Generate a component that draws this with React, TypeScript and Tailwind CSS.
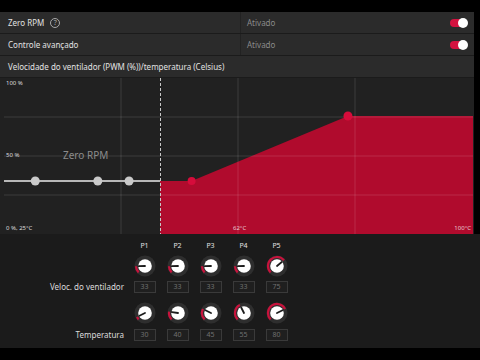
import React from "react";

const FONT = { fontFamily: '"Noto Sans", "Open Sans", sans-serif' };

const RED = "#b00b2d";
const DOT = "#d60c3b";

// chart geometry (local svg coords)
const CW = 474;
const CH = 156;
const X0 = 4;
const X1 = 473;
const tx = (t: number) => X0 + ((t - 25) / 75) * (X1 - X0);
const vy = (v: number) => CH * (1 - v / 100);

function Toggle() {
  return (
    <div className="relative mr-[4px] h-[8px] w-[18px]">
      <div className="absolute left-0 top-0 h-[8px] w-[15px] rounded-full bg-[#d3123f]" />
      <div className="absolute right-0 top-[-1px] h-[10px] w-[10px] rounded-full bg-white" />
    </div>
  );
}

function SettingRow({ label, value, help }: { label: string; value?: string; help?: boolean }) {
  return (
    <div className="flex h-[22px] border-b border-[#1b1b1b] bg-[#2b2b2b]">
      <div className="flex w-[240px] items-center gap-[6px] pl-[8px] text-[8px] text-[#e2e2e2]">
        <span>{label}</span>
        {help && (
          <span className="flex h-[10px] w-[10px] items-center justify-center rounded-full border border-[#a8a8a8] text-[7px] leading-none text-[#a8a8a8]">
            ?
          </span>
        )}
      </div>
      {value !== undefined && (
        <div className="flex flex-1 items-center justify-between border-l border-[#222] pl-[6px] pr-[2px] text-[8px] text-[#8a8a8a]">
          <span>{value}</span>
          <Toggle />
        </div>
      )}
    </div>
  );
}

function Chart() {
  const grid = [CH / 4, CH / 2, (CH * 3) / 4];
  const vgrid = [121, 238, 355];
  const zeroY = 103;
  const redPts = [
    [160, zeroY],
    [tx(55), zeroY],
    [tx(80), vy(75) - 1],
    [X1, vy(75) - 1],
    [X1, CH],
    [160, CH],
  ]
    .map((p) => p.join(","))
    .join(" ");
  return (
    <div className="relative h-[156px] w-[474px] bg-[#212121]">
      <svg width={CW} height={CH} className="block">
        <polygon points={redPts} fill={RED} />
        {grid.map((y) => (
          <line key={y} x1={X0} x2={X1} y1={y} y2={y} stroke="#ffffff" strokeOpacity={0.13} strokeWidth={1} />
        ))}
        {vgrid.map((x) => (
          <line key={x} x1={x} x2={x} y1={0} y2={CH} stroke="#ffffff" strokeOpacity={0.13} strokeWidth={1} />
        ))}
        <line x1={160.5} x2={160.5} y1={0} y2={CH} stroke="#c8c8c8" strokeWidth={1} strokeDasharray="3 2" />
        <line x1={X0} x2={160} y1={zeroY} y2={zeroY} stroke="#b8b8b8" strokeWidth={2} />
        {[30, 40, 45].map((t) => (
          <circle key={t} cx={tx(t)} cy={zeroY} r={4.5} fill="#cacaca" />
        ))}
        <circle cx={tx(55)} cy={zeroY} r={4} fill={DOT} />
        <circle cx={tx(80)} cy={vy(75) - 1} r={4.5} fill={DOT} />
      </svg>
      <span className="absolute left-[6px] top-[1px] text-[6px] text-[#dcdcdc]">100 %</span>
      <span className="absolute left-[6px] top-[73px] text-[6px] text-[#dcdcdc]">50 %</span>
      <span className="absolute left-[6px] top-[146px] text-[6px] text-[#dcdcdc]">0 %, 25°C</span>
      <span className="absolute left-[233px] top-[146px] text-[6px] text-[#e8c8d0]">62°C</span>
      <span className="absolute right-[3px] top-[146px] text-[6px] text-[#e8c8d0]">100°C</span>
      <span className="absolute left-[63px] top-[70px] text-[10px] text-[#8c8c8c]">Zero RPM</span>
    </div>
  );
}

function Knob({ frac }: { frac: number }) {
  const start = 225;
  const end = start + frac * 270;
  const r = 9;
  const pt = (deg: number, rad: number) => {
    const a = ((deg - 90) * Math.PI) / 180;
    return [11 + rad * Math.cos(a), 11 + rad * Math.sin(a)];
  };
  const [sx, sy] = pt(start, r);
  const [ex, ey] = pt(end, r);
  const large = frac * 270 > 180 ? 1 : 0;
  const [ix, iy] = pt(end, 6.2);
  return (
    <svg width={22} height={22} className="block">
      <circle cx={11} cy={11} r={10.5} fill="#2e2e2e" />
      <path d={`M ${sx} ${sy} A ${r} ${r} 0 ${large} 1 ${ex} ${ey}`} fill="none" stroke="#c8123c" strokeWidth={2.2} />
      <circle cx={11} cy={11} r={6.8} fill="#ffffff" />
      <line x1={11} y1={11} x2={ix} y2={iy} stroke="#1c1c1c" strokeWidth={1.8} strokeLinecap="round" />
    </svg>
  );
}

function ValueBox({ v }: { v: number }) {
  return (
    <div className="flex h-[12px] w-[22px] items-center justify-center border border-[#3a3a3a] bg-[#1f1f1f] text-[7px] text-[#707070]">
      {v}
    </div>
  );
}

const fan = [33, 33, 33, 33, 75];
const temp = [30, 40, 45, 55, 80];

function Points() {
  return (
    <div className="h-[114px] w-[480px] bg-[#1b1b1b] pt-[7px]">
      <div className="flex">
        <div className="w-[128px]" />
        {["P1", "P2", "P3", "P4", "P5"].map((p) => (
          <div key={p} className="flex w-[33px] justify-center text-[7px] leading-[10px] text-[#e0e0e0]">
            {p}
          </div>
        ))}
      </div>
      <div className="mt-[4px] flex">
        <div className="w-[128px]" />
        {fan.map((v, i) => (
          <div key={i} className="flex w-[33px] justify-center">
            <Knob frac={(v - 20) / 80} />
          </div>
        ))}
      </div>
      <div className="mt-[4px] flex h-[12px] items-center">
        <div className="w-[128px] pr-[4px] text-right text-[8px] text-[#dcdcdc]">Veloc. do ventilador</div>
        {fan.map((v, i) => (
          <div key={i} className="flex w-[33px] justify-center">
            <ValueBox v={v} />
          </div>
        ))}
      </div>
      <div className="mt-[9px] flex">
        <div className="w-[128px]" />
        {temp.map((v, i) => (
          <div key={i} className="flex w-[33px] justify-center">
            <Knob frac={(v - 25) / 75} />
          </div>
        ))}
      </div>
      <div className="mt-[5px] flex h-[12px] items-center">
        <div className="w-[128px] pr-[4px] text-right text-[8px] text-[#dcdcdc]">Temperatura</div>
        {temp.map((v, i) => (
          <div key={i} className="flex w-[33px] justify-center">
            <ValueBox v={v} />
          </div>
        ))}
      </div>
    </div>
  );
}

export default function App() {
  return (
    <div className="h-[360px] w-[480px] overflow-hidden bg-black pt-[12px]" style={FONT}>
      <div className="w-[474px]">
        <SettingRow label="Zero RPM" value="Ativado" help />
        <SettingRow label="Controle avançado" value="Ativado" />
        <SettingRow label="Velocidade do ventilador (PWM (%))/temperatura (Celsius)" />
        <Chart />
      </div>
      <Points />
    </div>
  );
}
